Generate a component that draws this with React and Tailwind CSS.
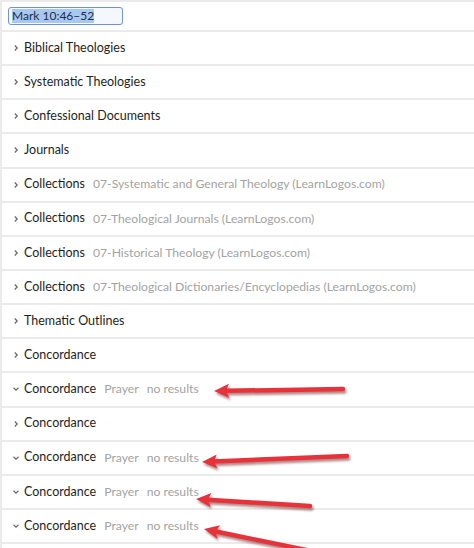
import React from "react";

const rows = [
  { t: "Biblical Theologies" },
  { t: "Systematic Theologies" },
  { t: "Confessional Documents" },
  { t: "Journals" },
  { t: "Collections", s: "07-Systematic and General Theology (LearnLogos.com)" },
  { t: "Collections", s: "07-Theological Journals (LearnLogos.com)" },
  { t: "Collections", s: "07-Historical Theology (LearnLogos.com)" },
  { t: "Collections", s: "07-Theological Dictionaries/Encyclopedias (LearnLogos.com)" },
  { t: "Thematic Outlines" },
  { t: "Concordance" },
  { t: "Concordance", open: true, s: "Prayer", r: "no results" },
  { t: "Concordance" },
  { t: "Concordance", open: true, s: "Prayer", r: "no results" },
  { t: "Concordance", open: true, s: "Prayer", r: "no results" },
  { t: "Concordance", open: true, s: "Prayer", r: "no results" },
  { t: "" },
];

function Chevron({ open }) {
  return open ? (
    <svg width="8" height="8" viewBox="0 0 8 8" className="shrink-0">
      <path d="M1.5 2.8 L4 5.2 L6.5 2.8" fill="none" stroke="#666" strokeWidth="1.2" />
    </svg>
  ) : (
    <svg width="8" height="8" viewBox="0 0 8 8" className="shrink-0">
      <path d="M2.8 1.5 L5.2 4 L2.8 6.5" fill="none" stroke="#666" strokeWidth="1.2" />
    </svg>
  );
}

function Arrow({ x1, y1, x2, y2 }) {
  const dx = x2 - x1, dy = y2 - y1;
  const len = Math.hypot(dx, dy);
  const ux = dx / len, uy = dy / len;
  const px = -uy, py = ux;
  const hl = 15, hw = 7;
  const bx = x2 - ux * hl, by = y2 - uy * hl;
  const pts = `${x2},${y2} ${bx + px * hw},${by + py * hw} ${bx + ux * 3},${by + uy * 3} ${bx - px * hw},${by - py * hw}`;
  return (
    <g>
      <g transform="translate(1.5,2.5)" opacity="0.45" filter="url(#blur)">
        <line x1={x1} y1={y1} x2={bx + ux * 4} y2={by + uy * 4} stroke="#500" strokeWidth="4.5" strokeLinecap="round" />
        <polygon points={pts} fill="#500" />
      </g>
      <line x1={x1} y1={y1} x2={bx + ux * 4} y2={by + uy * 4} stroke="#e8323a" strokeWidth="4.5" strokeLinecap="round" />
      <polygon points={pts} fill="#e8323a" />
    </g>
  );
}

export default function App() {
  return (
    <div
      className="relative w-[474px] h-[548px] overflow-hidden bg-[#ebebeb] pt-[2px] pl-[2px] flex flex-col gap-[2px]"
      style={{ fontFamily: "Lato, 'Noto Sans', sans-serif" }}
    >
      <div className="h-[28px] shrink-0 bg-white flex items-center pl-[6px]">
        <div className="w-[115px] h-[18px] border border-[#6f93d9] rounded-[3px] bg-[#f4f7fc] flex items-center pl-[3px] text-[12px] text-[#1d2c4a]">
          <span className="bg-[#a9c8f0] leading-[14px]">Mark 10:46–52</span>
        </div>
      </div>
      {rows.map((r, i) => (
        <div key={i} className="h-[32.15px] shrink-0 bg-white flex items-center pl-[10px] text-[12.5px]">
          {r.t && <Chevron open={r.open} />}
          {r.t && <span className="ml-[4px] text-[#1e1e1e]">{r.t}</span>}
          {r.s && <span className="ml-[8px] text-[12.2px] text-[#a3a3a3]">{r.s}</span>}
          {r.r && <span className="ml-[8px] text-[12.2px] text-[#a3a3a3]">{r.r}</span>}
        </div>
      ))}
      <svg className="absolute inset-0 pointer-events-none" width="474" height="548">
        <defs>
          <filter id="blur" x="-10%" y="-50%" width="120%" height="200%">
            <feGaussianBlur stdDeviation="1.2" />
          </filter>
        </defs>
        <Arrow x1={343} y1={389} x2={214} y2={391} />
        <Arrow x1={347} y1={456} x2={202} y2={462} />
        <Arrow x1={310} y1={506} x2={196} y2={499} />
        <Arrow x1={316} y1={552} x2={204} y2={529} />
      </svg>
    </div>
  );
}
